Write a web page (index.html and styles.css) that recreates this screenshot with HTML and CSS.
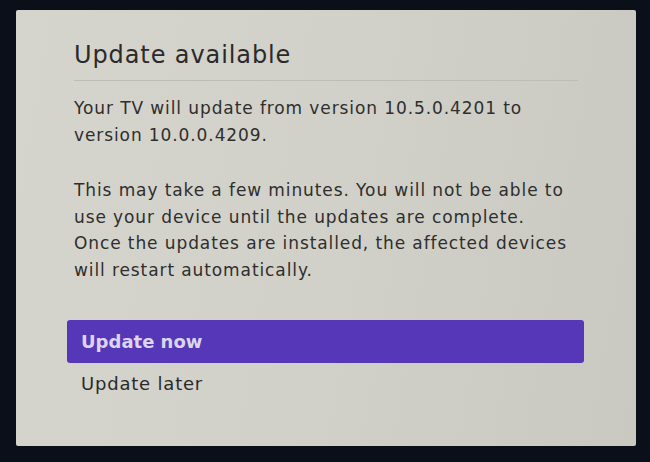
FILE: index.html
```html
<!DOCTYPE html>
<html lang="en">
<head>
    <meta charset="UTF-8">
    <meta name="viewport" content="width=device-width, initial-scale=1.0">
    <title>Update available</title>
    <link rel="stylesheet" href="styles.css">
</head>
<body>
    <div class="screen">
        <div class="dialog">
            <h1 class="dialog-title">Update available</h1>
            <p class="dialog-text">Your TV will update from version 10.5.0.4201 to version 10.0.0.4209.</p>
            <p class="dialog-text">This may take a few minutes. You will not be able to use your device until the updates are complete. Once the updates are installed, the affected devices will restart automatically.</p>

            <div class="actions">
                <button class="action selected">Update now</button>
                <button class="action">Update later</button>
            </div>
        </div>
    </div>
</body>
</html>
```

FILE: styles.css
```css
body {
    margin: 0;
    padding: 0;
    background-color: #0b0f1a;
    font-family: 'DejaVu Sans', sans-serif;
    color: #2b2b2b;
}

.screen {
    width: 650px;
    height: 462px;
    padding: 10px 14px 16px 16px;
    box-sizing: border-box;
}

.dialog {
    height: 100%;
    box-sizing: border-box;
    padding: 29px 52px 0 51px;
    background: linear-gradient(100deg, #d6d5cd 0%, #d2d1c9 50%, #c9c9c1 100%);
    border-radius: 2px;
}

.dialog-title {
    margin: 0 6px 0 7px;
    padding-bottom: 8px;
    font-size: 24px;
    line-height: 33px;
    font-weight: 400;
    letter-spacing: 0.9px;
    color: #2a2a2a;
    border-bottom: 1px solid #bdbcb5;
}

.dialog-text {
    margin: 14px 0 29px 7px;
    font-size: 17px;
    line-height: 26.5px;
    letter-spacing: 0.9px;
    color: #2e2e2e;
    max-width: 500px;
}

.actions {
    display: flex;
    flex-direction: column;
    margin-top: 37px;
}

.action {
    font-family: inherit;
    font-size: 18px;
    text-align: left;
    border: none;
    background: none;
    padding: 0 14px;
    height: 43px;
    letter-spacing: 0.8px;
    color: #2a2a2a;
    border-radius: 3px;
}

.action.selected {
    background-color: #5637b8;
    color: #dcd5f0;
    font-weight: 600;
    letter-spacing: 0;
}

.action + .action {
    height: 40px;
}
```
